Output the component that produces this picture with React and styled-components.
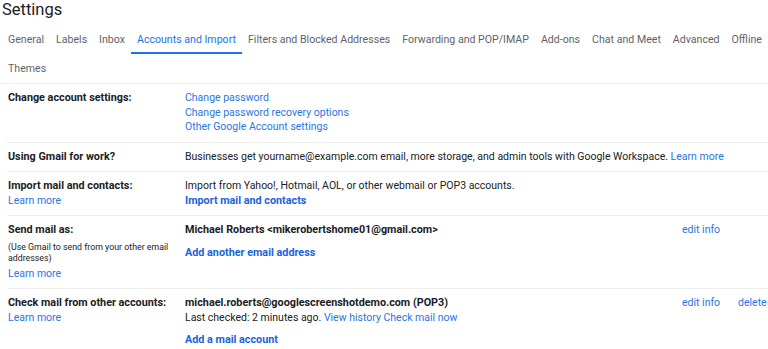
import React from 'react';
import styled, { createGlobalStyle } from 'styled-components';

const GlobalStyle = createGlobalStyle`
  body {
    margin: 0;
    background: #fff;
    font-family: Roboto, "Liberation Sans", Arial, sans-serif;
    color: #202124;
  }
`;

const Page = styled.div`
  width: 768px;
  height: 349px;
  overflow: hidden;
`;

const Title = styled.h1`
  margin: 0;
  padding: 0 0 0 2px;
  height: 25px;
  font-size: 16.5px;
  line-height: 20px;
  font-weight: 400;
  color: #202124;
`;

const Tabs = styled.nav`
  padding: 0 0 0 2px;
  border-bottom: 1px solid #eeeeee;
`;

const TabRow = styled.div`
  display: flex;
  flex-wrap: nowrap;
`;

const Tab = styled.div`
  height: 29px;
  line-height: 29px;
  padding: 0 6px;
  font-size: 10.6px;
  white-space: nowrap;
  box-sizing: border-box;
  color: ${(p) => (p.active ? '#1a73e8' : '#5f6368')};
  border-bottom: 2px solid ${(p) => (p.active ? '#1a73e8' : 'transparent')};
`;

const Rows = styled.div`
  margin-left: 7px;
`;

const Row = styled.div`
  display: grid;
  grid-template-columns: 177px 1fr 86px;
  padding: 7px 0 7px 1px;
  border-bottom: 1px solid #eeeeee;
  font-size: 10.5px;
  line-height: 14.5px;
`;

const Label = styled.div`
  font-weight: 700;
  font-size: 10.8px;
  color: #202124;
`;

const LabelCell = styled.div`
  display: flex;
  flex-direction: column;
`;

const Note = styled.div`
  font-size: 8.8px;
  line-height: 11px;
  color: #202124;
  margin: 4px 0 3px;
`;

const Content = styled.div`
  display: flex;
  flex-direction: column;
  color: #202124;
  white-space: nowrap;
`;

const Link = styled.a`
  color: ${(p) => (p.bold ? '#1a63dc' : '#2a74e4')};
  text-decoration: none;
  cursor: pointer;
  white-space: nowrap;
  font-weight: ${(p) => (p.bold ? 700 : 400)};
  ${(p) => p.bold && 'font-size: 10.8px;'}
  ${(p) => p.gap && `margin-top: ${p.gap}px;`}
`;

const Strong = styled.div`
  font-weight: 700;
  font-size: 10.8px;
`;

const Actions = styled.div`
  display: flex;
  gap: 18px;
`;

const tabs = [
  'General',
  'Labels',
  'Inbox',
  'Accounts and Import',
  'Filters and Blocked Addresses',
  'Forwarding and POP/IMAP',
  'Add-ons',
  'Chat and Meet',
  'Advanced',
  'Offline',
];

export default function App() {
  return (
    <Page>
      <GlobalStyle />
      <Title>Settings</Title>
      <Tabs>
        <TabRow>
          {tabs.map((t) => (
            <Tab key={t} active={t === 'Accounts and Import'}>
              {t}
            </Tab>
          ))}
        </TabRow>
        <TabRow>
          <Tab>Themes</Tab>
        </TabRow>
      </Tabs>
      <Rows>
        <Row>
          <Label>Change account settings:</Label>
          <Content>
            <Link>Change password</Link>
            <Link>Change password recovery options</Link>
            <Link>Other Google Account settings</Link>
          </Content>
        </Row>
        <Row>
          <Label>Using Gmail for work?</Label>
          <Content>
            <span>
              Businesses get yourname@example.com email, more storage, and admin tools with Google
              Workspace. <Link>Learn more</Link>
            </span>
          </Content>
        </Row>
        <Row>
          <LabelCell>
            <Label>Import mail and contacts:</Label>
            <Link>Learn more</Link>
          </LabelCell>
          <Content>
            <span>Import from Yahoo!, Hotmail, AOL, or other webmail or POP3 accounts.</span>
            <Link bold>Import mail and contacts</Link>
          </Content>
        </Row>
        <Row>
          <LabelCell>
            <Label>Send mail as:</Label>
            <Note>
              (Use Gmail to send from your other email
              <br />
              addresses)
            </Note>
            <Link>Learn more</Link>
          </LabelCell>
          <Content>
            <Strong>Michael Roberts &lt;mikerobertshome01@gmail.com&gt;</Strong>
            <Link bold gap={8}>
              Add another email address
            </Link>
          </Content>
          <Actions>
            <Link>edit info</Link>
          </Actions>
        </Row>
        <Row>
          <LabelCell>
            <Label>Check mail from other accounts:</Label>
            <Link>Learn more</Link>
          </LabelCell>
          <Content>
            <Strong>michael.roberts@googlescreenshotdemo.com (POP3)</Strong>
            <span>
              Last checked: 2 minutes ago. <Link>View history</Link> <Link>Check mail now</Link>
            </span>
            <Link bold gap={8}>
              Add a mail account
            </Link>
          </Content>
          <Actions>
            <Link>edit info</Link>
            <Link>delete</Link>
          </Actions>
        </Row>
      </Rows>
    </Page>
  );
}
